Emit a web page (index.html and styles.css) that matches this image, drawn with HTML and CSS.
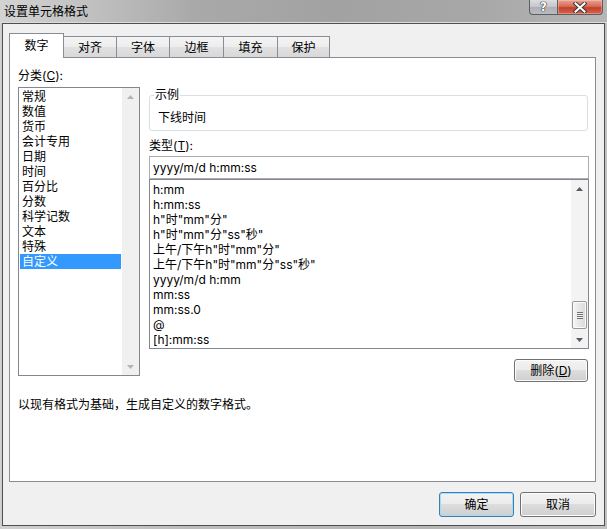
FILE: index.html
```html
<!DOCTYPE html>
<html lang="zh-CN">
<head>
<meta charset="utf-8">
<title>设置单元格格式</title>
<link rel="stylesheet" href="styles.css">
</head>
<body>
<div class="window">
  <div class="titlebar">
    <span class="title">设置单元格格式</span>
    <div class="caption-btns">
      <span class="cap help">?</span>
      <span class="cap close"><svg width="14" height="11" viewBox="0 0 14 11"><path d="M2.5 1.5 L11.5 9.5 M11.5 1.5 L2.5 9.5" stroke="#3a3a3a" stroke-width="4" stroke-linecap="square"/><path d="M2.5 1.5 L11.5 9.5 M11.5 1.5 L2.5 9.5" stroke="#ffffff" stroke-width="2" stroke-linecap="square"/></svg></span>
    </div>
  </div>
  <div class="client">
    <div class="tabs">
      <div class="tab active t1">数字</div>
      <div class="tab t2">对齐</div>
      <div class="tab t3">字体</div>
      <div class="tab t4">边框</div>
      <div class="tab t5">填充</div>
      <div class="tab t6">保护</div>
    </div>
    <div class="panel">
      <div class="panel-body">
        <div class="col-left">
          <div class="label">分类(<u>C</u>):</div>
          <div class="listbox cat">
            <ul class="items">
              <li>常规</li>
              <li>数值</li>
              <li>货币</li>
              <li>会计专用</li>
              <li>日期</li>
              <li>时间</li>
              <li>百分比</li>
              <li>分数</li>
              <li>科学记数</li>
              <li>文本</li>
              <li>特殊</li>
              <li class="sel">自定义</li>
            </ul>
            <div class="vscroll disabled">
              <span class="arrow"><svg width="7" height="4" viewBox="0 0 7 4"><polygon points="0,4 3.5,0 7,4"/></svg></span>
              <span class="track"></span>
              <span class="arrow"><svg width="7" height="4" viewBox="0 0 7 4"><polygon points="0,0 3.5,4 7,0"/></svg></span>
            </div>
          </div>
        </div>
        <div class="col-right">
          <fieldset class="sample">
            <legend>示例</legend>
            <div class="sample-text">下线时间</div>
          </fieldset>
          <div class="label type-label">类型(<u>T</u>):</div>
          <div class="textbox">yyyy/m/d h:mm:ss</div>
          <div class="listbox fmt">
            <ul class="items">
              <li>h:mm</li>
              <li>h:mm:ss</li>
              <li>h"时"mm"分"</li>
              <li>h"时"mm"分"ss"秒"</li>
              <li>上午/下午h"时"mm"分"</li>
              <li>上午/下午h"时"mm"分"ss"秒"</li>
              <li>yyyy/m/d h:mm</li>
              <li>mm:ss</li>
              <li>mm:ss.0</li>
              <li>@</li>
              <li>[h]:mm:ss</li>
            </ul>
            <div class="vscroll">
              <span class="arrow"><svg width="7" height="4" viewBox="0 0 7 4"><polygon points="0,4 3.5,0 7,4"/></svg></span>
              <span class="track"><span class="thumb"><span class="grip"></span></span></span>
              <span class="arrow"><svg width="7" height="4" viewBox="0 0 7 4"><polygon points="0,0 3.5,4 7,0"/></svg></span>
            </div>
          </div>
          <div class="del-row"><button class="btn del">删除(<u>D</u>)</button></div>
        </div>
      </div>
      <p class="desc">以现有格式为基础，生成自定义的数字格式。</p>
    </div>
    <div class="footer">
      <button class="btn default ok">确定</button>
      <button class="btn cancel">取消</button>
    </div>
  </div>
</div>
</body>
</html>
```
FILE: styles.css
```css
* { box-sizing: border-box; }
html, body { margin: 0; padding: 0; }
body {
  width: 607px;
  height: 529px;
  overflow: hidden;
  font-family: Inter, "Noto Sans CJK SC", sans-serif;
  font-size: 12px;
  color: #000;
}
.window {
  width: 607px;
  height: 529px;
  background: linear-gradient(to right, #d0d0d0, #bdbdbd 30%, #b6b6b6 70%, #c2c2c2);
  display: flex;
  flex-direction: column;
}
.titlebar {
  height: 23px;
  flex: none;
  display: flex;
  justify-content: space-between;
  align-items: flex-start;
  background: linear-gradient(to right, #d3d3d3 0%, #c4c4c4 12%, #a9a9a9 32%, #a2a2a2 55%, #a7a7a7 78%, #b6b6b6 100%);
  box-shadow: inset 0 -1px 0 #dcdcdc;
}
.title {
  padding: 4px 0 0 4px;
  line-height: 15px;
  color: #000;
}
.caption-btns {
  display: flex;
  margin-right: 4px;
}
.cap {
  height: 15px;
  display: flex;
  align-items: center;
  justify-content: center;
  border: 1px solid #5e5e62;
  border-top: 0;
}
.help {
  width: 28px;
  border-radius: 0 0 0 4px;
  border-right: 0;
  background: linear-gradient(#dcdde0, #c3c5ca 50%, #aeb0b6 51%, #b9bbc0);
  color: #fff;
  font-weight: bold;
  font-size: 12px;
  line-height: 13px;
  text-shadow: 0 0 1px #2c2c2c, 0 0 1px #2c2c2c, 0 0 1px #2c2c2c;
  font-family: "DejaVu Sans", sans-serif;
}
.close {
  width: 46px;
  border-radius: 0 0 4px 0;
  background: linear-gradient(#e8a495, #d86b57 45%, #c4402a 55%, #d4654d);
  box-shadow: inset 0 0 0 1px rgba(255, 220, 210, 0.35);
}
.close svg { display: block; }

.client {
  flex: none;
  height: 503px;
  margin: 0 2px;
  border: 1px solid #4f4f4f;
  background: #f0f0f0;
  padding: 9px 8px 0 6px;
  display: flex;
  flex-direction: column;
}

/* tabs */
.tabs {
  display: flex;
  align-items: flex-end;
  height: 25px;
  margin-bottom: -1px;
}
.tab {
  height: 21px;
  margin-bottom: 1px;
  border: 1px solid #898c95;
  border-bottom: 0;
  border-left: 0;
  display: flex;
  align-items: center;
  justify-content: center;
  line-height: 15px;
  background: linear-gradient(#f4f4f4, #ededed 50%, #e1e1e1 51%, #d8d8d8);
}
.tab.active {
  height: 25px;
  margin-bottom: 0;
  border-left: 1px solid #898c95;
  background: #fff;
  position: relative;
  z-index: 1;
  padding-bottom: 1px;
}
.t1 { width: 55px; }
.t2 { width: 53px; }
.t3 { width: 53px; }
.t4 { width: 54px; }
.t5 { width: 54px; }
.t6 { width: 52px; }

.panel {
  height: 425px;
  border: 1px solid #898c95;
  background: #fff;
  padding: 10px 6px 0 8px;
}
.panel-body {
  display: flex;
  align-items: flex-start;
}
.col-left {
  width: 122px;
  margin-right: 9px;
  flex: none;
}
.label {
  line-height: 15px;
  height: 15px;
  margin-bottom: 4px;
}
.listbox {
  border: 1px solid #828790;
  display: flex;
  background: #fff;
}
.listbox.cat { height: 289px; }
.items {
  list-style: none;
  margin: 0;
  padding: 1px;
  flex: 1;
  min-width: 0;
}
.items li {
  height: 15px;
  line-height: 15px;
  padding-left: 2px;
  white-space: nowrap;
}
.items li.sel {
  background: #3399ff;
  color: #fff;
}
.vscroll {
  width: 17px;
  flex: none;
  display: flex;
  flex-direction: column;
  background: #f0f0f0;
}
.vscroll .arrow {
  height: 17px;
  flex: none;
  display: flex;
  align-items: center;
  justify-content: center;
}
.vscroll .arrow svg { display: block; fill: #5b5b5b; }
.vscroll.disabled .arrow svg { fill: #b4b4b4; }
.vscroll .track { flex: 1; }

.col-right {
  width: 440px;
  flex: none;
  margin-top: 20px;
}
.sample {
  margin: 0 1px 0 0;
  padding: 0 0 5px 4px;
  border: 1px solid #d5dfe5;
  border-radius: 3px;
  min-width: 0;
}
.sample legend {
  padding: 0 1px;
  line-height: 14px;
  height: 14px;
}
.sample-text {
  margin-top: 8px;
  padding-left: 4px;
  line-height: 15px;
  height: 15px;
}
.type-label {
  margin-top: 7px;
  margin-bottom: 3px;
}
.textbox {
  height: 23px;
  border: 1px solid #abadb3;
  padding: 0 3px;
  line-height: 21px;
  white-space: nowrap;
}
.listbox.fmt { height: 170px; }
.listbox.fmt .items { padding-top: 2px; }
.listbox.fmt .vscroll { background: #f3f3f3; }
.thumb {
  display: flex;
  align-items: center;
  justify-content: center;
  height: 28px;
  margin: 104px 1px 0 1px;
  border: 1px solid #989898;
  border-radius: 2px;
  background: linear-gradient(to right, #f6f6f6, #e6e6e6 50%, #d9d9d9);
  box-shadow: inset 0 0 0 1px #fbfbfb;
}
.grip {
  width: 6px;
  height: 7px;
  background: repeating-linear-gradient(#707070 0 1px, #f4f4f4 1px 2px);
}
.del-row {
  display: flex;
  justify-content: flex-end;
  margin-top: 10px;
  padding-right: 1px;
}

.btn {
  font: inherit;
  color: #000;
  padding: 0;
  border: 1px solid #707070;
  border-radius: 3px;
  background: linear-gradient(#f3f3f3, #ebebeb 49%, #dddddd 50%, #cfcfcf);
  box-shadow: inset 0 0 0 1px #fcfcfc;
  line-height: 15px;
  display: flex;
  align-items: center;
  justify-content: center;
}
.btn.del { width: 74px; height: 23px; }
.btn.default {
  border-color: #3c7fb1;
  box-shadow: inset 0 0 0 1px #a7dcf7;
}
.desc {
  margin: 15px 0 0 0;
  line-height: 15px;
  height: 15px;
}
.footer {
  display: flex;
  justify-content: flex-end;
  gap: 6px;
  margin-top: 10px;
}
.btn.ok { width: 75px; height: 25px; }
.btn.cancel { width: 76px; height: 25px; }
```
